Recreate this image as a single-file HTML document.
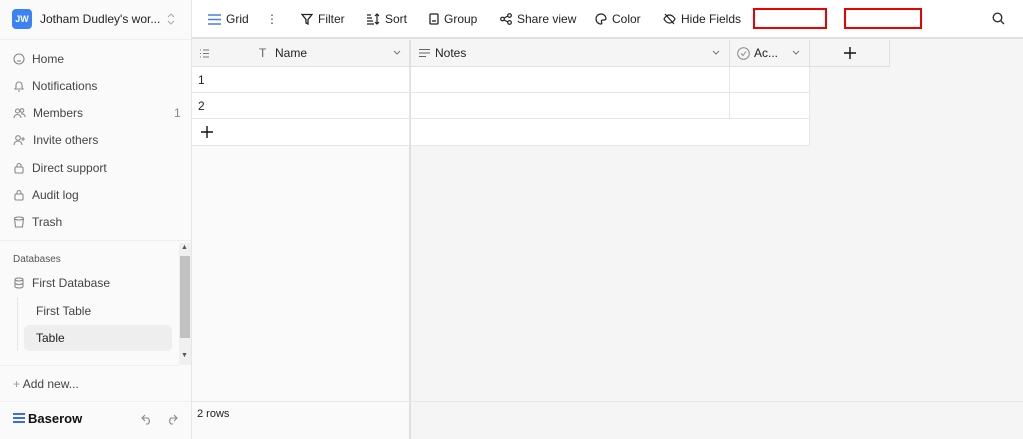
<!DOCTYPE html><html><head><style>
*{box-sizing:border-box;margin:0;padding:0}
body{width:1023px;height:439px;overflow:hidden;font-family:"Liberation Sans",sans-serif;font-size:12px;color:#222;background:#f5f5f5;position:relative}
.a{position:absolute}
.sb{left:0;top:0;width:192px;height:439px;background:#fafafa;border-right:1px solid #e6e6e6}
.it{position:absolute;left:13px;color:#444;font-size:12px;display:flex;align-items:center;gap:7px}
svg{display:inline-block;flex:none}
.tb{left:192px;top:0;width:831px;height:39px;background:#fff;border-bottom:2px solid #e0e0e0}
.tbi{position:absolute;top:12px;font-size:12px;color:#222;display:flex;align-items:center;gap:5px}
.cell{position:absolute;background:#fff;border-bottom:1px solid #e6e6e6;border-right:1px solid #e6e6e6}
.hd{position:absolute;background:#f5f5f5;border-bottom:1px solid #e0e0e0;border-right:1px solid #e0e0e0;font-size:12px}
</style></head><body>
<div class="a sb">
 <div class="a" style="left:12px;top:9px;width:20px;height:20px;background:#3b82f6;border-radius:4px;color:#fff;font-size:9px;font-weight:bold;text-align:center;line-height:20px">JW</div>
 <div class="a" style="left:40px;top:12px;font-size:12px;color:#222">Jotham Dudley's wor...</div>
 <svg class="a" style="left:167px;top:12px" width="8" height="14" viewBox="0 0 8 14" fill="none" stroke="#aaa" stroke-width="1"><path d="M1 5l3-3 3 3M1 9l3 3 3-3"/></svg>
 <div class="a" style="left:0;top:39px;width:191px;border-top:1px solid #eee"></div>
 <div class="it" style="top:52px"><svg width="12" height="12" viewBox="0 0 12 12" fill="none" stroke="#888" stroke-width="1.1"><circle cx="6" cy="6" r="5"/><path d="M4 8h4"/></svg>Home</div>
 <div class="it" style="top:79px"><svg width="12" height="12" viewBox="0 0 12 12" fill="none" stroke="#888" stroke-width="1.1"><path d="M2 9h8L9 7.5V5a3 3 0 0 0-6 0v2.5zM5 11h2"/></svg>Notifications</div>
 <div class="it" style="top:106px"><svg width="13" height="12" viewBox="0 0 13 12" fill="none" stroke="#888" stroke-width="1.1"><circle cx="4.5" cy="4" r="2"/><circle cx="9" cy="3.5" r="1.8"/><path d="M1 11a3.5 3.5 0 0 1 7 0M8 7a3 3 0 0 1 4 3"/></svg>Members</div>
 <div class="a" style="left:174px;top:106px;color:#888">1</div>
 <div class="it" style="top:133px"><svg width="13" height="12" viewBox="0 0 13 12" fill="none" stroke="#888" stroke-width="1.1"><circle cx="5" cy="4" r="2.3"/><path d="M1 11a4 4 0 0 1 8 0M10 3v4M8 5h4"/></svg>Invite others</div>
 <div class="it" style="top:161px"><svg width="12" height="12" viewBox="0 0 12 12" fill="none" stroke="#888" stroke-width="1.1"><rect x="2" y="5" width="8" height="6" rx="1"/><path d="M4 5V3.5a2 2 0 0 1 4 0V5"/></svg>Direct support</div>
 <div class="it" style="top:188px"><svg width="12" height="12" viewBox="0 0 12 12" fill="none" stroke="#888" stroke-width="1.1"><rect x="2" y="5" width="8" height="6" rx="1"/><path d="M4 5V3.5a2 2 0 0 1 4 0V5"/></svg>Audit log</div>
 <div class="it" style="top:215px"><svg width="12" height="12" viewBox="0 0 12 12" fill="none" stroke="#888" stroke-width="1.1"><ellipse cx="6" cy="2.5" rx="4.5" ry="1.5"/><path d="M1.5 2.5l1 8.5h7l1-8.5"/></svg>Trash</div>
 <div class="a" style="left:0;top:240px;width:191px;border-top:1px solid #eee"></div>
 <div class="a" style="left:13px;top:254px;font-size:10px;color:#555">Databases</div>
 <div class="it" style="top:276px"><svg width="12" height="12" viewBox="0 0 12 12" fill="none" stroke="#888" stroke-width="1.1"><ellipse cx="6" cy="2.5" rx="4" ry="1.5"/><path d="M2 2.5v7c0 .8 1.8 1.5 4 1.5s4-.7 4-1.5v-7M2 6c0 .8 1.8 1.5 4 1.5S10 6.8 10 6"/></svg>First Database</div>
 <div class="a" style="left:17px;top:297px;height:54px;border-left:1px solid #e6e6e6"></div>
 <div class="a" style="left:36px;top:304px;color:#444">First Table</div>
 <div class="a" style="left:24px;top:325px;width:148px;height:26px;background:#eee;border-radius:5px"></div>
 <div class="a" style="left:36px;top:331px;color:#222">Table</div>
 <div class="a" style="left:179px;top:243px;width:12px;height:122px;background:#f0f0f0"></div>
 <div class="a" style="left:180px;top:256px;width:10px;height:82px;background:#c1c1c1"></div>
 <div class="a" style="left:181px;top:244px;font-size:7px;color:#555">▲</div>
 <div class="a" style="left:181px;top:352px;font-size:7px;color:#555">▼</div>
 <div class="a" style="left:0;top:365px;width:179px;border-top:1px solid #eee;background:#fafafa;height:36px"></div>
 <div class="a" style="left:13px;top:377px;color:#444"><span style="color:#999">+</span> Add new...</div>
 <div class="a" style="left:0;top:401px;width:191px;border-top:1px solid #eee"></div>
 <div class="a" style="left:13px;top:413px;width:12px;height:12px;background:repeating-linear-gradient(#3b6fe0 0 2px,transparent 2px 4px)"></div>
 <div class="a" style="left:28px;top:411px;font-size:13px;font-weight:bold;color:#111">Baserow</div>
 <svg class="a" style="left:141px;top:414px" width="12" height="11" viewBox="0 0 12 11" fill="none" stroke="#888" stroke-width="1.1"><path d="M4 1L1 4l3 3M1 4h6a4 4 0 0 1 0 6H5"/></svg>
 <svg class="a" style="left:166px;top:414px" width="12" height="11" viewBox="0 0 12 11" fill="none" stroke="#888" stroke-width="1.1"><path d="M8 1l3 3-3 3M11 4H5a4 4 0 0 0 0 6h2"/></svg>
</div>
<div class="a tb">
 <div class="tbi" style="left:16px"><svg width="13" height="11" viewBox="0 0 13 11" stroke="#4a7fe0" stroke-width="1.5"><path d="M0 1h13M0 5.5h13M0 10h13"/></svg>Grid</div>
 <div class="tbi" style="left:74px;color:#444">⋮</div>
 <div class="tbi" style="left:109px"><svg width="12" height="12" viewBox="0 0 12 12" fill="none" stroke="#222" stroke-width="1.3"><path d="M1 1.5h10L7 6.5V11L5 10V6.5z"/></svg>Filter</div>
 <div class="tbi" style="left:174px"><svg width="14" height="12" viewBox="0 0 14 12" fill="none" stroke="#222" stroke-width="1.2"><path d="M1 2h4M1 5h5M1 8h6M1 11h7M11 1v10M9 3l2-2 2 2M9 9l2 2 2-2"/></svg>Sort</div>
 <div class="tbi" style="left:237px"><svg width="10" height="12" viewBox="0 0 10 12" fill="none" stroke="#222" stroke-width="1.3"><rect x="1" y="1" width="8" height="10" rx="1"/><path d="M3 8h4"/></svg>Group</div>
 <div class="tbi" style="left:308px"><svg width="12" height="12" viewBox="0 0 12 12" fill="none" stroke="#222" stroke-width="1.2"><circle cx="9.5" cy="2.5" r="1.8"/><circle cx="2.5" cy="6" r="1.8"/><circle cx="9.5" cy="9.5" r="1.8"/><path d="M4 5l4-2M4 7l4 2"/></svg>Share view</div>
 <div class="tbi" style="left:403px"><svg width="12" height="12" viewBox="0 0 12 12" fill="none" stroke="#222" stroke-width="1.2"><path d="M6 1a5 5 0 0 0 0 10c1 0 1-1 .5-2s0-2 1.5-2h1.5A2 2 0 0 0 11 5 5 5 0 0 0 6 1z"/></svg>Color</div>
 <div class="tbi" style="left:471px"><svg width="13" height="12" viewBox="0 0 13 12" fill="none" stroke="#222" stroke-width="1.2"><path d="M1 6s2-4 5.5-4S12 6 12 6s-2 4-5.5 4S1 6 1 6zM2 1l9 10"/></svg>Hide Fields</div>
 <div class="a" style="left:561px;top:8px;width:74px;height:21px;border:2px solid #e00"></div>
 <div class="a" style="left:652px;top:8px;width:78px;height:21px;border:2px solid #e00"></div>
 <svg class="a" style="left:800px;top:12px" width="13" height="13" viewBox="0 0 13 13" fill="none" stroke="#333" stroke-width="1.4"><circle cx="5.5" cy="5.5" r="4.3"/><path d="M8.8 8.8L12 12"/></svg>
</div>
<div class="a" style="left:192px;top:40px;width:219px;height:399px;background:#fafafa;border-right:2px solid #e0e0e0"></div>
<div class="hd" style="left:192px;top:40px;width:218px;height:27px"></div>
<svg class="a" style="left:200px;top:49px" width="9" height="9" viewBox="0 0 9 9" stroke="#777" stroke-width="1"><path d="M0 1h1M3 1h6M0 4.5h1M3 4.5h6M0 8h1M3 8h6"/></svg>
<div class="a" style="left:259px;top:46px;color:#666">T</div>
<div class="a" style="left:275px;top:46px">Name</div>
<svg class="a" style="left:393px;top:50px" width="8" height="5" viewBox="0 0 8 5" fill="none" stroke="#777"><path d="M1 1l3 3 3-3"/></svg>
<div class="cell" style="left:192px;top:67px;width:218px;height:26px"></div><div class="a" style="left:198px;top:73px">1</div>
<div class="cell" style="left:192px;top:93px;width:218px;height:26px"></div><div class="a" style="left:198px;top:99px">2</div>
<div class="cell" style="left:192px;top:119px;width:218px;height:27px"></div>
<svg class="a" style="left:201px;top:126px" width="12" height="12" viewBox="0 0 12 12" stroke="#111" stroke-width="1.4"><path d="M6 0v12M0 6h12"/></svg>
<div class="hd" style="left:411px;top:40px;width:319px;height:27px"></div>
<svg class="a" style="left:419px;top:49px" width="11" height="8" viewBox="0 0 11 8" stroke="#666" stroke-width="1"><path d="M0 .5h11M0 4h11M0 7.5h7"/></svg>
<div class="a" style="left:435px;top:46px">Notes</div>
<svg class="a" style="left:712px;top:50px" width="8" height="5" viewBox="0 0 8 5" fill="none" stroke="#777"><path d="M1 1l3 3 3-3"/></svg>
<div class="hd" style="left:730px;top:40px;width:80px;height:27px"></div>
<svg class="a" style="left:737px;top:47px" width="13" height="13" viewBox="0 0 13 13" fill="none" stroke="#888"><circle cx="6.5" cy="6.5" r="5.8"/><path d="M4 6.5l2 2 3-4"/></svg>
<div class="a" style="left:754px;top:46px">Ac...</div>
<svg class="a" style="left:792px;top:50px" width="8" height="5" viewBox="0 0 8 5" fill="none" stroke="#777"><path d="M1 1l3 3 3-3"/></svg>
<div class="hd" style="left:810px;top:40px;width:80px;height:27px"></div>
<svg class="a" style="left:844px;top:47px" width="12" height="12" viewBox="0 0 12 12" stroke="#111" stroke-width="1.4"><path d="M6 0v12M0 6h12"/></svg>
<div class="cell" style="left:411px;top:67px;width:319px;height:26px"></div>
<div class="cell" style="left:730px;top:67px;width:80px;height:26px"></div>
<div class="cell" style="left:411px;top:93px;width:319px;height:26px"></div>
<div class="cell" style="left:730px;top:93px;width:80px;height:26px"></div>
<div class="cell" style="left:411px;top:119px;width:399px;height:27px"></div>
<div class="a" style="left:192px;top:401px;width:831px;border-top:1px solid #e6e6e6"></div>
<div class="a" style="left:197px;top:408px;font-size:11px">2 rows</div>
</body></html>
